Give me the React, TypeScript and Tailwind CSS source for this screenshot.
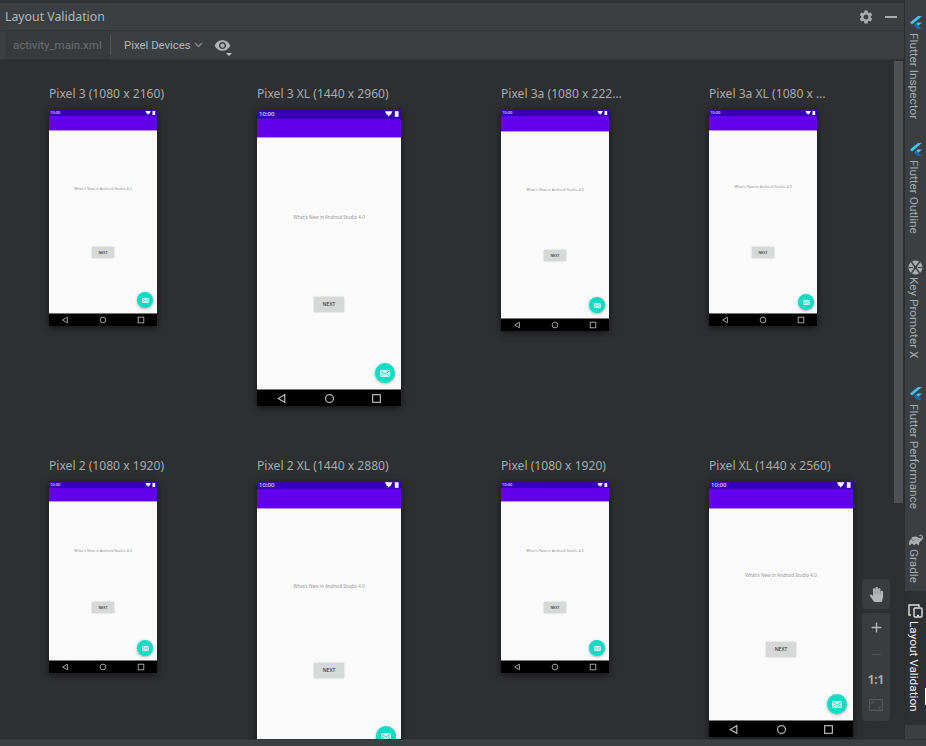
import { Minus, Plus } from "lucide-react";
import { FaHandPaper } from "react-icons/fa";
import { MdSettings, MdVisibility } from "react-icons/md";
import { SiGradle } from "react-icons/si";

const devices = [
  { label: "Pixel 3 (1080 x 2160)", large: false, h: "h-[217px]", status: "h-[7px]", app: "h-[15px]", nav: "h-[13px]", text: "mt-[55px]", btn: "mt-[55px]", fab: "right-[4px] bottom-[5px]" },
  { label: "Pixel 3 XL (1440 x 2960)", large: true, h: "h-[297px]", status: "h-[10px]", app: "h-[19px]", nav: "h-[17px]", text: "mt-[75px]", btn: "mt-[76px]", fab: "right-[6px] bottom-[6px]" },
  { label: "Pixel 3a (1080 x 222…", large: false, h: "h-[222px]", status: "h-[7px]", app: "h-[16px]", nav: "h-[13px]", text: "mt-[55px]", btn: "mt-[57px]", fab: "right-[4px] bottom-[5px]" },
  { label: "Pixel 3a XL (1080 x …", large: false, h: "h-[217px]", status: "h-[7px]", app: "h-[15px]", nav: "h-[13px]", text: "mt-[53px]", btn: "mt-[57px]", fab: "right-[3px] bottom-[3px]" },
  { label: "Pixel 2 (1080 x 1920)", large: false, h: "h-[192px]", status: "h-[7px]", app: "h-[14px]", nav: "h-[13px]", text: "mt-[46px]", btn: "mt-[48px]", fab: "right-[4px] bottom-[4px]" },
  { label: "Pixel 2 XL (1440 x 2880)", large: true, h: "h-[288px]", status: "h-[8px]", app: "h-[20px]", nav: "h-[17px]", text: "mt-[73px]", btn: "mt-[73px]", fab: "right-[5px] bottom-[6px]" },
  { label: "Pixel (1080 x 1920)", large: false, h: "h-[192px]", status: "h-[7px]", app: "h-[14px]", nav: "h-[13px]", text: "mt-[46px]", btn: "mt-[48px]", fab: "right-[4px] bottom-[4px]" },
  { label: "Pixel XL (1440 x 2560)", large: true, h: "h-[256px]", status: "h-[8px]", app: "h-[20px]", nav: "h-[17px]", text: "mt-[62px]", btn: "mt-[63px]", fab: "right-[6px] bottom-[6px]" },
];

const FlutterIcon = () => (
  <svg width="14" height="15" viewBox="0 0 14 15">
    <polygon points="9,0 13,0 3,8.5 1,6.5" fill="#40c4ff" />
    <polygon points="8.5,6.5 13,6.5 7.5,11.5 5.5,9.5" fill="#40c4ff" />
    <polygon points="5.5,9.5 7.5,7.8 13,13 8.5,13" fill="#0d6fb8" />
  </svg>
);

const KeyPromoterIcon = () => (
  <svg width="15" height="15" viewBox="0 0 15 15">
    <circle cx="7.5" cy="7.5" r="7" fill="#a9abac" />
    <path d="M3.5 2 L11.5 13 M11.5 2 L3.5 13" stroke="#3c3f41" strokeWidth="1.4" />
    <path d="M0.5 7.5 H5 M10 7.5 H14.5" stroke="#3c3f41" strokeWidth="1" />
    <circle cx="7.5" cy="7.5" r="1.6" fill="#3c3f41" />
  </svg>
);

const LayoutIcon = () => (
  <svg width="15" height="14" viewBox="0 0 15 14" fill="none" stroke="#dfe1e2" strokeWidth="1.4">
    <path d="M3 11 H1 V1 H11 V3" />
    <rect x="6" y="4" width="8" height="9" rx="1" />
    <path d="M9 11.5 H11" />
  </svg>
);

const MailGlyph = ({ large }: { large: boolean }) => (
  <svg width={large ? 10 : 7} height={large ? 7 : 5} viewBox="0 0 10 7">
    <rect width="10" height="7" rx="1" fill="#c9f3ee" />
    <path d="M0.5 1 L5 4 L9.5 1 M0.5 6.5 L3 4 M9.5 6.5 L7 4" fill="none" stroke="#0bdcc4" strokeWidth="0.8" />
  </svg>
);

type Device = (typeof devices)[number];

const Phone = ({ d }: { d: Device }) => {
  const s = d.large ? 11 : 8;
  return (
    <div className={`flex shrink-0 flex-col bg-black shadow-[0_2px_7px_rgba(0,0,0,0.55)] ${d.large ? "w-[144px]" : "w-[108px]"} ${d.h}`}>
      <div className={`flex shrink-0 items-center justify-between bg-[#3700b3] text-white ${d.status} ${d.large ? "px-[2px] text-[6px]" : "px-[1px] text-[4px]"}`}>
        <span className="leading-none">10:00</span>
        <svg width={d.large ? 14 : 11} height={d.large ? 6 : 4} viewBox="0 0 15 6" fill="#ffffff">
          <polygon points="0,0 8,0 6,4 2,4" />
          <polygon points="3,4 5,4 4,6" />
          <rect x="10.5" y="0" width="4" height="6" />
        </svg>
      </div>
      <div className={`shrink-0 border-b border-[#b98cf5] bg-[#6200ee] ${d.app}`} />
      <div className="relative flex min-h-0 flex-1 flex-col items-center bg-[#fafafa]">
        <div className={`whitespace-nowrap text-[#999999] ${d.text} ${d.large ? "h-[8px] text-[4.6px] leading-[8px]" : "h-[6px] text-[3.7px] leading-[6px]"}`}>
          What's New in Android Studio 4.0
        </div>
        <div className={`flex items-center justify-center bg-[#d6d7d7] font-medium text-[#333333] shadow-[0_0_2px_rgba(0,0,0,0.2)] ${d.btn} ${d.large ? "h-[15px] w-[30px] text-[5px]" : "h-[11px] w-[22px] text-[3.7px]"}`}>
          NEXT
        </div>
        <div className={`absolute flex items-center justify-center rounded-full bg-[#0bdcc4] shadow-[0_1px_3px_rgba(0,0,0,0.3)] ${d.fab} ${d.large ? "h-[20px] w-[20px]" : "h-[16px] w-[16px]"}`}>
          <MailGlyph large={d.large} />
        </div>
      </div>
      <div className={`flex shrink-0 items-center justify-between border-t border-[#777777] ${d.nav} ${d.large ? "px-[19px]" : "px-[12px]"}`}>
        <svg width={s} height={s} viewBox="0 0 10 10" fill="none" stroke="#b5b5b5" strokeWidth="1.1">
          <polygon points="2,5 8,1.5 8,8.5" />
        </svg>
        <svg width={s} height={s} viewBox="0 0 10 10" fill="none" stroke="#b5b5b5" strokeWidth="1.1">
          <circle cx="5" cy="5" r="3.6" />
        </svg>
        <svg width={s} height={s} viewBox="0 0 10 10" fill="none" stroke="#b5b5b5" strokeWidth="1.1">
          <rect x="1.5" y="1.5" width="7" height="7" />
        </svg>
      </div>
    </div>
  );
};

const StripItem = ({ icon, label, className }: { icon: React.ReactNode; label: string; className: string }) => (
  <div className={`flex w-full flex-col items-center gap-[2px] ${className}`}>
    <div className="flex h-[15px] items-center justify-center">{icon}</div>
    <span className="mr-[3px] whitespace-nowrap font-['Roboto',sans-serif] text-[11.8px] leading-[14px] text-[#a9abac] [writing-mode:vertical-rl]">{label}</span>
  </div>
);

export default function App() {
  return (
    <div className="relative flex h-[746px] w-[926px] flex-col overflow-hidden bg-[#3c3f41] font-['Noto_Sans',sans-serif]">
      <div className="flex min-h-0 flex-1">
        {/* main tool window */}
        <div className="flex min-w-0 flex-1 flex-col border-r border-[#2b2d2e]">
          <div className="flex h-[31px] shrink-0 items-center justify-between border-t-[3px] border-b border-t-[#323436] border-b-[#323436] pl-[5px] pr-[7px]">
            <span className="pt-[1px] text-[12.3px] text-[#b4b6b7]">Layout Validation</span>
            <div className="flex items-center gap-[11px]">
              <MdSettings size={16} className="text-[#a9abac]" />
              <div className="h-[2px] w-[12px] bg-[#a9abac]" />
            </div>
          </div>
          <div className="flex h-[29px] shrink-0 items-center border-b border-[#323436] pl-[5px]">
            <div className="flex h-full w-[105px] items-center bg-[#383b3d] pl-[8px] pt-[1px] font-['Roboto',sans-serif] text-[11.5px] text-[#6c6e70]">activity_main.xml</div>
            <div className="h-[20px] w-px bg-[#55585a]" />
            <span className="ml-[13px] pt-[1px] font-['Roboto',sans-serif] text-[11.4px] text-[#b4b6b7]">Pixel Devices</span>
            <svg className="ml-[3px]" width="9" height="6" viewBox="0 0 9 6" fill="none" stroke="#85888a" strokeWidth="1.3">
              <path d="M1 1 L4.5 4.5 L8 1" />
            </svg>
            <div className="relative ml-[11px]">
              <MdVisibility size={17} className="text-[#b0b2b3]" />
              <div className="absolute -bottom-[2px] -right-[1px] h-0 w-0 border-x-[3px] border-t-[3px] border-x-transparent border-t-[#c4c6c7]" />
            </div>
          </div>
          <div className="relative flex min-h-0 flex-1 bg-[#2e2f30]">
            <div className="min-w-0 flex-1 overflow-hidden">
              <div className="grid grid-cols-[208px_244px_208px_1fr] auto-rows-[372px] pl-[49px] pt-[25px]">
                {devices.map((d) => (
                  <div key={d.label} className="flex flex-col items-start">
                    <div className="mb-[8px] h-[16px] whitespace-nowrap pt-[1px] text-[12.1px] leading-[16px] text-[#a9abac]">{d.label}</div>
                    <Phone d={d} />
                  </div>
                ))}
              </div>
            </div>
            <div className="mr-[1px] mt-px w-[9px] shrink-0">
              <div className="h-[442px] bg-[#4f5152]" />
            </div>
            {/* floating zoom controls */}
            <div className="absolute left-[862px] top-[519px] flex w-[28px] flex-col gap-[4px]">
              <div className="flex h-[30px] items-center justify-center rounded-[4px] bg-[#3a3c3e]">
                <FaHandPaper size={15} className="text-[#b4b6b7]" />
              </div>
              <div className="flex h-[108px] flex-col items-center justify-between rounded-[4px] bg-[#3a3c3e] pb-[10px] pt-[7px]">
                <Plus size={15} strokeWidth={2.2} className="text-[#b4b6b7]" />
                <Minus size={13} strokeWidth={2.2} className="text-[#55585a]" />
                <span className="text-[11.5px] font-bold leading-none text-[#a9abac]">1:1</span>
                <svg width="14" height="12" viewBox="0 0 14 12" fill="none" stroke="#55585a" strokeWidth="1.2">
                  <rect x="0.6" y="0.6" width="12.8" height="10.8" />
                  <path d="M3 5 V3 H5 M9 9 H11 V7" />
                </svg>
              </div>
            </div>
          </div>
        </div>
        {/* right tool strip */}
        <div className="flex w-[21px] shrink-0 flex-col items-center">
          <StripItem className="mt-[16px] h-[127px]" icon={<FlutterIcon />} label="Flutter Inspector" />
          <StripItem className="h-[117px]" icon={<FlutterIcon />} label="Flutter Outline" />
          <StripItem className="h-[127px]" icon={<KeyPromoterIcon />} label="Key Promoter X" />
          <StripItem className="h-[145px]" icon={<FlutterIcon />} label="Flutter Performance" />
          <StripItem className="h-[59px]" icon={<SiGradle size={14} className="text-[#a9abac]" />} label="Gradle" />
          <div className="flex h-[134px] w-full flex-col items-center gap-[3px] bg-[#2e2f30] pt-[13px]">
            <LayoutIcon />
            <span className="mr-[3px] whitespace-nowrap font-['Roboto',sans-serif] text-[11.8px] leading-[14px] text-[#f2f2f2] [writing-mode:vertical-rl]">Layout Validation</span>
          </div>
        </div>
      </div>
      <div className="h-[7px] shrink-0 border-t border-[#323436] bg-[#3c3f41]" />
      <div className="absolute left-[925px] top-[688px] h-[17px] w-px bg-white" />
    </div>
  );
}
